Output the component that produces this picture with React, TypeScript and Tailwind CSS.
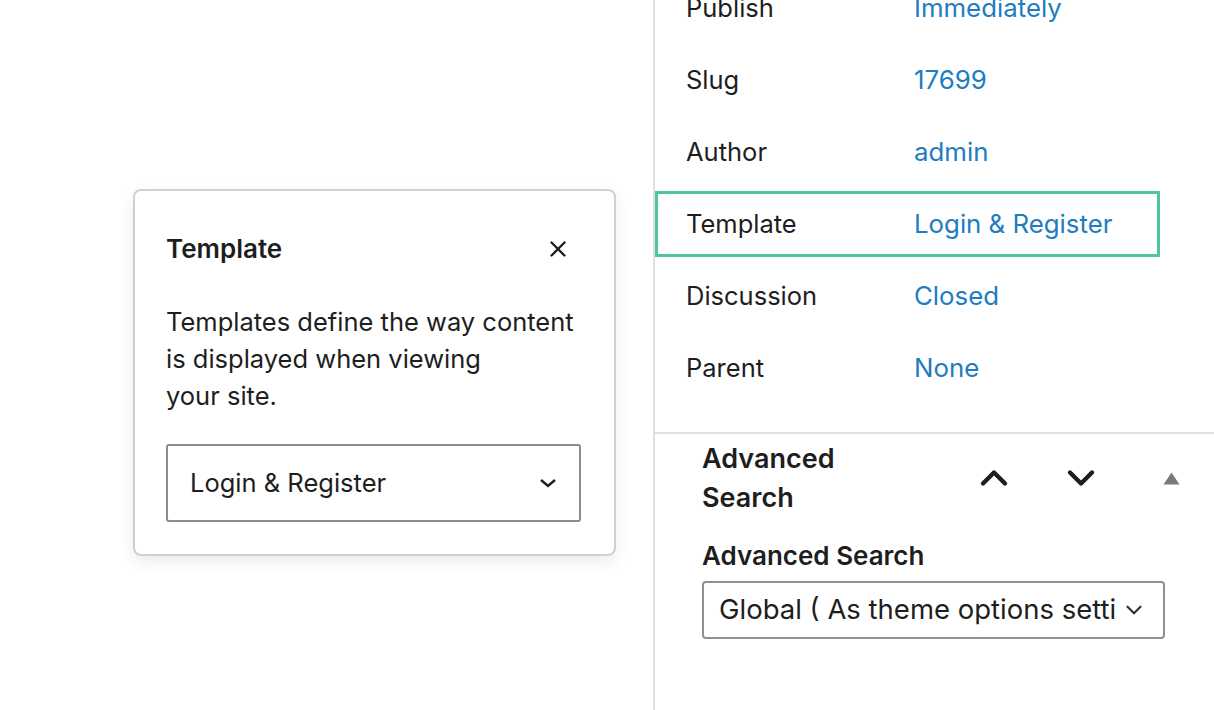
import { X, ChevronDown, ChevronUp } from "lucide-react";

const rows = [
  { label: "Publish", value: "Immediately" },
  { label: "Slug", value: "17699" },
  { label: "Author", value: "admin" },
  { label: "Template", value: "Login & Register", active: true },
  { label: "Discussion", value: "Closed" },
  { label: "Parent", value: "None" },
];

function SmallChevron() {
  return (
    <svg width="18" height="10" viewBox="0 0 18 10" fill="none">
      <path d="M2 2l7 6 7-6" stroke="#1e1e1e" strokeWidth="2.4" />
    </svg>
  );
}

export default function App() {
  return (
    <div className="flex h-[710px] w-[1214px] overflow-hidden bg-white font-['Inter',sans-serif] text-[#1e1e1e]">
      {/* editor canvas area */}
      <div className="relative w-[653px] shrink-0">
        <div className="absolute left-[133px] top-[189px] w-[483px] rounded-[8px] border-2 border-[#d0d0d0] bg-white pb-[32px] pl-[31px] pr-[33px] pt-[40px] shadow-[0_6px_16px_rgba(0,0,0,0.08)]">
          <div className="flex items-center justify-between">
            <h2 className="text-[26px] font-semibold leading-[36px]">Template</h2>
            <X className="mr-[10px] h-[26px] w-[26px]" strokeWidth={2.2} />
          </div>
          <p className="mt-[36px] text-[25.5px] leading-[37px]">
            Templates define the way content
            <br />
            is displayed when viewing
            <br />
            your site.
          </p>
          <div className="mt-[30px] flex h-[78px] items-center justify-between rounded-[3px] border-2 border-[#8c8c8c] pl-[22px] pr-[22px]">
            <span className="text-[25.5px]">Login &amp; Register</span>
            <SmallChevron />
          </div>
        </div>
      </div>

      {/* sidebar */}
      <div className="flex w-[561px] shrink-0 flex-col border-l-2 border-[#e0e0e0]">
        <div className="-mt-[28px] pb-[28px]">
          {rows.map((r) => (
            <div key={r.label} className="flex h-[72px] items-center">
              <div
                className={
                  r.active
                    ? "flex h-[66px] w-[505px] items-center border-[3px] border-[#4fc6a0] pl-[28px]"
                    : "flex h-[66px] w-[505px] items-center border-[3px] border-transparent pl-[28px]"
                }
              >
                <span className="w-[228px] text-[25.5px]">{r.label}</span>
                <span className="text-[25.8px] text-[#1e7cc0]">{r.value}</span>
              </div>
            </div>
          ))}
        </div>

        <div className="border-t-2 border-[#e0e0e0] pl-[47px] pt-[5px]">
          <div className="flex items-center">
            <h3 className="w-[190px] text-[27px] font-semibold leading-[39px]">
              Advanced
              <br />
              Search
            </h3>
            <div className="ml-[80px] flex items-center">
              <ChevronUp className="h-[44px] w-[44px]" strokeWidth={2.4} />
              <ChevronDown className="ml-[43px] h-[44px] w-[44px]" strokeWidth={2.4} />
              <svg className="ml-[60px]" width="17" height="13" viewBox="0 0 17 13">
                <path d="M8.5 0.5L16.5 12.5H0.5z" fill="#7a7a7a" />
              </svg>
            </div>
          </div>
          <div className="mt-[22px] text-[26px] font-semibold leading-[34px]">Advanced Search</div>
          <div className="mt-[8px] flex h-[58px] w-[463px] items-center justify-between rounded-[4px] border-2 border-[#8c8f94] pl-[15px] pr-[16px]">
            <span className="overflow-hidden whitespace-nowrap text-[27.5px] text-[#1e1e1e]">
              Global ( As theme options setti
            </span>
            <ChevronDown className="h-[26px] w-[26px] shrink-0 text-[#2c3338]" strokeWidth={2} />
          </div>
        </div>
      </div>
    </div>
  );
}
